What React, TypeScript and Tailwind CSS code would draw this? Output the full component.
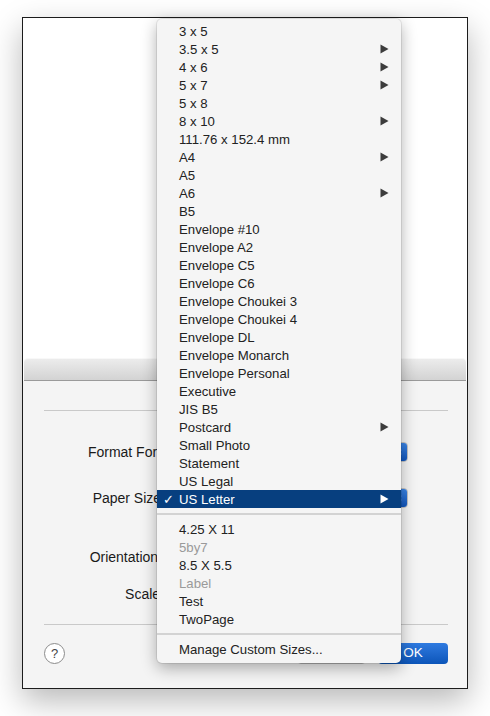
import React from 'react';

type Item = { label: string; arrow?: boolean; dim?: boolean; selected?: boolean };

const sizes: Item[] = [
  { label: '3 x 5' },
  { label: '3.5 x 5', arrow: true },
  { label: '4 x 6', arrow: true },
  { label: '5 x 7', arrow: true },
  { label: '5 x 8' },
  { label: '8 x 10', arrow: true },
  { label: '111.76 x 152.4 mm' },
  { label: 'A4', arrow: true },
  { label: 'A5' },
  { label: 'A6', arrow: true },
  { label: 'B5' },
  { label: 'Envelope #10' },
  { label: 'Envelope A2' },
  { label: 'Envelope C5' },
  { label: 'Envelope C6' },
  { label: 'Envelope Choukei 3' },
  { label: 'Envelope Choukei 4' },
  { label: 'Envelope DL' },
  { label: 'Envelope Monarch' },
  { label: 'Envelope Personal' },
  { label: 'Executive' },
  { label: 'JIS B5' },
  { label: 'Postcard', arrow: true },
  { label: 'Small Photo' },
  { label: 'Statement' },
  { label: 'US Legal' },
  { label: 'US Letter', arrow: true, selected: true },
];

const custom: Item[] = [
  { label: '4.25 X 11' },
  { label: '5by7', dim: true },
  { label: '8.5 X 5.5' },
  { label: 'Label', dim: true },
  { label: 'Test' },
  { label: 'TwoPage' },
];

const Arrow = ({ white }: { white?: boolean }) => (
  <svg width="9" height="10" viewBox="0 0 9 10" className="absolute left-[223px] top-[4px]">
    <polygon points="0.5,0.5 8.5,5 0.5,9.5" fill={white ? '#ffffff' : '#3c3c3c'} />
  </svg>
);

const Row = ({ item }: { item: Item }) => (
  <div
    className={
      'relative h-[18px] leading-[19px] pl-[22px] ' +
      (item.selected ? 'bg-[#073f7f] text-white' : item.dim ? 'text-[#9a9a9a]' : 'text-[#222222]')
    }
  >
    {item.selected && <span className="absolute left-[6px] top-0 text-[13px]">✓</span>}
    {item.label}
    {item.arrow && <Arrow white={item.selected} />}
  </div>
);

const Separator = () => (
  <div className="h-[12px] flex items-center">
    <div className="w-full h-[2px] bg-[#d3d3d3]" />
  </div>
);

const Popup = () => (
  <div className="w-[240px] h-[20px] flex rounded-[4px] bg-white border border-[#c4c4c4] overflow-hidden">
    <div className="flex-1" />
    <div className="w-[17px] h-full bg-gradient-to-b from-[#3b86e8] to-[#0f55bd] flex items-center justify-center">
      <svg width="7" height="12" viewBox="0 0 7 12">
        <path d="M1 4.5 L3.5 2 L6 4.5 M1 7.5 L3.5 10 L6 7.5" stroke="#fff" strokeWidth="1.2" fill="none" />
      </svg>
    </div>
  </div>
);

// label column ends under the open menu, so the colons stay hidden like in the shot
const Label = ({ children, pad }: { children: React.ReactNode; pad: string }) => (
  <div className={'w-[143px] shrink-0 text-right text-[14px] text-[#1a1a1a] ' + pad}>{children}</div>
);

export default function App() {
  return (
    <div
      className="relative min-h-[716px] bg-white pt-[17px] pl-[22px]"
      style={{ fontFamily: '"Liberation Sans", Arial, sans-serif' }}
    >
      <div className="w-[446px] h-[672px] border border-[#1c1c1c] bg-white flex flex-col shadow-[0_12px_30px_rgba(0,0,0,0.28)]">
        <div className="h-[340px] bg-white" />
        <div className="flex-1 flex flex-col">
          <div className="mx-[1px] h-[23px] rounded-t-[4px] bg-gradient-to-b from-[#ececec] to-[#d3d3d3] border-t border-[#f8f8f8] border-b border-b-[#9a9a9a]" />
          <div className="flex-1 bg-[#f4f4f4] flex flex-col">
            <div className="mt-[29px] ml-[21px] mr-[19px] h-px bg-[#c9c9c9]" />
            <div className="mt-[31px] flex items-center gap-[2px] h-[20px]">
              <Label pad="pr-[5px]">Format For:</Label>
              <Popup />
            </div>
            <div className="mt-[26px] flex items-center gap-[2px] h-[20px]">
              <Label pad="pr-[1px]">Paper Size:</Label>
              <Popup />
            </div>
            <div className="mt-[39px] flex items-center h-[20px]">
              <Label pad="pr-[4px]">Orientation:</Label>
            </div>
            <div className="mt-[17px] flex items-center h-[20px]">
              <Label pad="pr-[2px]">Scale:</Label>
            </div>
            <div className="mt-[20px] ml-[21px] mr-[19px] h-px bg-[#c9c9c9]" />
            <div className="mt-[18px] flex items-center pl-[21px] pr-[19px]">
              <div className="w-[21px] h-[21px] rounded-full border border-[#8c8c8c] bg-white flex items-center justify-center text-[13px] text-[#444]">
                ?
              </div>
              <div className="flex-1" />
              <div className="w-[69px] h-[21px] rounded-[4px] bg-white border border-[#b9b9b9] flex items-center justify-center text-[13px] text-[#222]">
                Cancel
              </div>
              <div className="ml-[12px] w-[70px] h-[21px] rounded-[4px] bg-gradient-to-b from-[#2e7ae0] to-[#0b55b9] flex items-center justify-center text-[13.5px] text-white">
                OK
              </div>
            </div>
          </div>
        </div>
      </div>

      <div className="absolute left-[157px] top-[19px] w-[244px] h-[644px] rounded-[5px] bg-[#f5f5f5] pt-[3px] text-[13.2px] shadow-[0_5px_16px_rgba(0,0,0,0.32),0_0_0_1px_rgba(0,0,0,0.08)] overflow-hidden">
        {sizes.map((s) => (
          <Row key={s.label} item={s} />
        ))}
        <Separator />
        {custom.map((s) => (
          <Row key={s.label} item={s} />
        ))}
        <Separator />
        <Row item={{ label: 'Manage Custom Sizes...' }} />
      </div>
    </div>
  );
}
